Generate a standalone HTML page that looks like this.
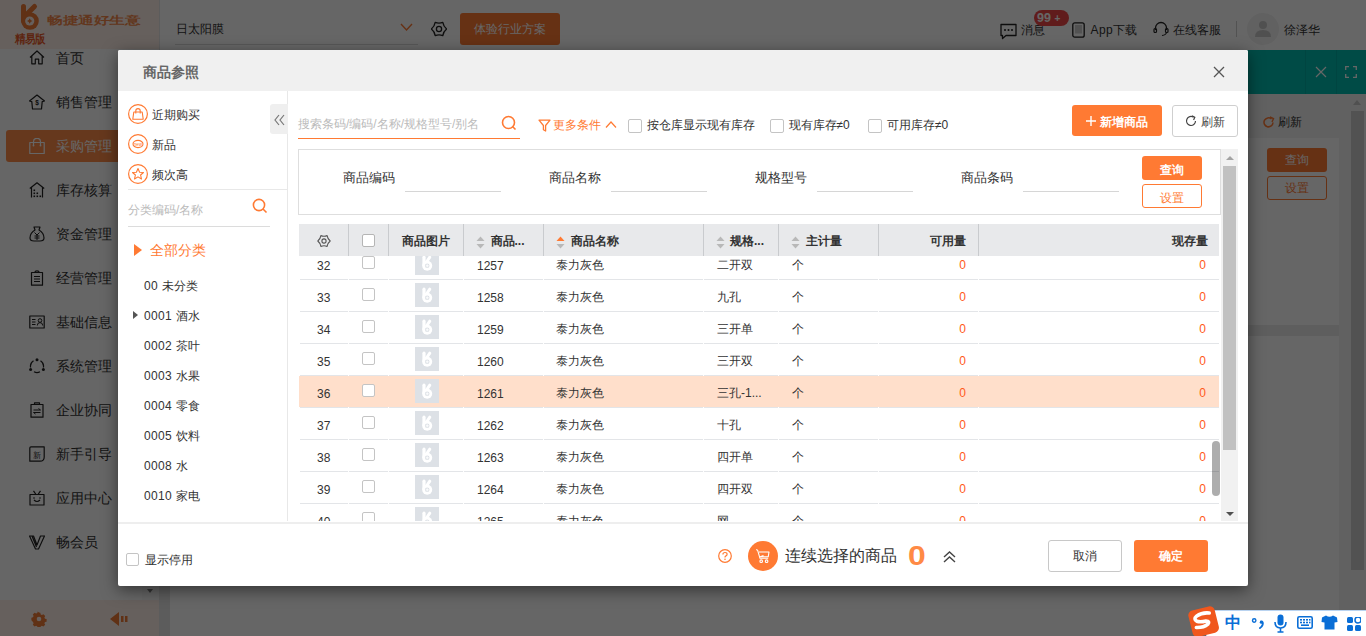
<!DOCTYPE html>
<html><head><meta charset="utf-8">
<style>
*{box-sizing:border-box;margin:0;padding:0}
html,body{width:1366px;height:636px;overflow:hidden;font-family:"Liberation Sans",sans-serif;font-size:12px;color:#333;background:#fff}
.a{position:absolute}
.t{position:absolute;white-space:nowrap;line-height:1}
/* background */
#bg{position:absolute;left:0;top:0;width:1366px;height:636px;background:#f4f4f4}
#side{left:0;top:0;width:160px;height:636px;background:#fff;border-right:1px solid #e6e6e6}
#logo{left:0;top:0;width:159px;height:49px;background:#fff1e8}
.mi{position:absolute;left:56px;font-size:14px;color:#333;line-height:1}
.ic{position:absolute;left:29px;width:16px;height:16px}
#top{left:160px;top:0;width:1206px;height:50px;background:#fff}
#ov{position:absolute;left:0;top:0;width:1366px;height:636px;background:rgba(0,0,0,0.6)}
/* modal */
#modal{position:absolute;left:118px;top:50px;width:1130px;height:536px;background:#fff;border-radius:2px;box-shadow:0 4px 16px rgba(0,0,0,0.5);overflow:hidden}
#mh{position:absolute;left:0;top:0;width:1130px;height:41px;background:#f0f0f0}
.cb{position:absolute;width:13px;height:13px;border:1px solid #c4c4c4;border-radius:2px;background:#fff}
.btn{position:absolute;border-radius:3px;text-align:center;line-height:1}
.or{color:#ff7a33}
</style></head><body>
<div id="bg">
  <div id="side" class="a">
    <div id="logo" class="a">
      <svg class="a" style="left:0px;top:0px" width="50" height="34" viewBox="0 0 50 34">
        <path d="M23.5 6.5 V21" stroke="#f07a35" stroke-width="5" stroke-linecap="round"/>
        <path d="M34.5 6.5 L27 14" stroke="#f07a35" stroke-width="5" stroke-linecap="round"/>
        <circle cx="30" cy="21" r="8.8" fill="#f07a35"/>
        <circle cx="29.7" cy="21" r="4.6" fill="#fff1e8"/>
        <path d="M29.7 18.3 Q30.2 20.5 32.4 21 Q30.2 21.5 29.7 23.7 Q29.2 21.5 27 21 Q29.2 20.5 29.7 18.3Z" fill="#f07a35"/>
      </svg>
      <div class="t" style="left:47px;top:12.5px;font-size:15.3px;font-weight:bold;color:#f5884a;letter-spacing:0.6px;transform:scaleY(0.7);transform-origin:0 50%;line-height:16px">畅捷通好生意</div>
      <div class="t" style="left:15px;top:33.5px;font-size:10px;font-weight:bold;color:#e85a2a;transform:scaleY(1.15);transform-origin:0 0">精易版</div>
    </div>
    <div class="a" style="left:6px;top:130px;width:154px;height:32px;background:#ff8d4a;border-radius:3px"></div>
    
    <svg class="ic" style="top:49.6px" viewBox="0 0 16 16"><path d="M1 7.5 L8 1 L15 7.5 M2.8 6 V13.8 H6.3 V9.2 H9.7 V13.8 H13.2 V6" fill="none" stroke="#222" stroke-width="1.2" stroke-linejoin="round"/></svg>
    <div class="mi" style="top:50.6px;color:#333">首页</div>
    <svg class="ic" style="top:93.6px" viewBox="0 0 16 16"><path d="M8 1 L15.5 7 L13.2 7.6 L12.5 15 H3.5 L2.8 7.6 L0.5 7 Z" fill="none" stroke="#222" stroke-width="1.2" stroke-linejoin="round"/><text x="8" y="11.3" font-size="6.5" font-weight="bold" text-anchor="middle" fill="#222" font-family="Liberation Sans">$</text></svg>
    <div class="mi" style="top:94.6px;color:#333">销售管理</div>
    <svg class="ic" style="top:137.6px" viewBox="0 0 16 16"><path d="M0.8 4.5 H15.2 V15.5 H0.8 Z M4.5 7.5 V3.8 A3.5 3.5 0 0 1 11.5 3.8 V7.5" fill="none" stroke="#fff" stroke-width="1.2" stroke-linejoin="round"/><circle cx="4.5" cy="7.6" r="0.9" fill="#fff"/><circle cx="11.5" cy="7.6" r="0.9" fill="#fff"/></svg>
    <div class="mi" style="top:138.6px;color:#fff">采购管理</div>
    <svg class="ic" style="top:181.6px" viewBox="0 0 16 16"><path d="M0.8 6.5 L8 0.8 L15.2 6.5 M2.5 5.2 V15.5 M13.5 5.2 V15.5" fill="none" stroke="#222" stroke-width="1.2" stroke-linejoin="round"/><g fill="#222"><rect x="4.5" y="7.5" width="1.6" height="1.6"/><rect x="4.5" y="10.5" width="1.6" height="1.6"/><rect x="7.5" y="10.5" width="1.6" height="1.6"/><rect x="4.5" y="13.5" width="1.6" height="1.6"/><rect x="7.5" y="13.5" width="1.6" height="1.6"/><rect x="10.5" y="13.5" width="1.6" height="1.6"/></g></svg>
    <div class="mi" style="top:182.6px;color:#333">库存核算</div>
    <svg class="ic" style="top:225.6px" viewBox="0 0 16 16"><path d="M5 1 H11 L10 4 Q15 7 15 12 Q15 15 11 15 H5 Q1 15 1 12 Q1 7 6 4 Z" fill="none" stroke="#222" stroke-width="1.2" stroke-linejoin="round"/><path d="M5.5 6.5 L8 9 L10.5 6.5 M8 9 V14 M5.5 10 H10.5 M5.5 12 H10.5" fill="none" stroke="#222" stroke-width="1"/></svg>
    <div class="mi" style="top:226.6px;color:#333">资金管理</div>
    <svg class="ic" style="top:269.6px" viewBox="0 0 16 16"><path d="M2.5 2.5 H13.5 V15.2 H2.5 Z M6 2.5 Q6 0.8 8 0.8 Q10 0.8 10 2.5" fill="none" stroke="#222" stroke-width="1.2" stroke-linejoin="round"/><path d="M5 6.5 H11 M5 9 H11 M5 11.5 H11" stroke="#222" stroke-width="1"/></svg>
    <div class="mi" style="top:270.6px;color:#333">经营管理</div>
    <svg class="ic" style="top:313.6px" viewBox="0 0 16 16"><path d="M0.8 2 H15.2 V14 H0.8 Z" fill="none" stroke="#222" stroke-width="1.2" stroke-linejoin="round"/><path d="M3 5.5 H6.5 M3 8 H6.5 M3 10.5 H6.5" stroke="#222" stroke-width="1"/><circle cx="11" cy="6.5" r="1.8" fill="none" stroke="#222" stroke-width="1"/><path d="M8.3 11.5 Q8.3 8.6 11 8.6 Q13.7 8.6 13.7 11.5" fill="none" stroke="#222" stroke-width="1"/></svg>
    <div class="mi" style="top:314.6px;color:#333">基础信息</div>
    <svg class="ic" style="top:357.6px" viewBox="0 0 16 16"><path d="M4.5 2.8 A6.5 6.5 0 0 0 1.6 9.5 M11.5 2.8 A6.5 6.5 0 0 1 14.4 9.5 M5 13.8 A6.5 6.5 0 0 0 11 13.8" fill="none" stroke="#222" stroke-width="1.2" stroke-linejoin="round"/><circle cx="8" cy="1.8" r="1.5" fill="#222"/><circle cx="1.6" cy="11.5" r="1.5" fill="#222"/><circle cx="14.4" cy="11.5" r="1.5" fill="#222"/></svg>
    <div class="mi" style="top:358.6px;color:#333">系统管理</div>
    <svg class="ic" style="top:401.6px" viewBox="0 0 16 16"><path d="M2 2.5 H14 V15.2 H2 Z M5.5 2.5 V0.8 H10.5 V2.5" fill="none" stroke="#222" stroke-width="1.2" stroke-linejoin="round"/><path d="M4.5 8 H11.5 L9.5 6.5 M11.5 10.5 H4.5 L6.5 12" fill="none" stroke="#222" stroke-width="1"/></svg>
    <div class="mi" style="top:402.6px;color:#333">企业协同</div>
    <svg class="ic" style="top:445.6px" viewBox="0 0 16 16"><path d="M2 0.8 H15.2 V11 Q15.2 15.2 11 15.2 H0.8 V2 Q0.8 0.8 2 0.8 Z" fill="none" stroke="#222" stroke-width="1.2" stroke-linejoin="round"/><text x="8" y="11.5" font-size="8" text-anchor="middle" fill="#222" font-family="Liberation Sans">新</text></svg>
    <div class="mi" style="top:446.6px;color:#333">新手引导</div>
    <svg class="ic" style="top:489.6px" viewBox="0 0 16 16"><path d="M1 4.5 H15 V15 H1 Z M4.5 0.8 L7 4.5 M11.5 0.8 L9 4.5" fill="none" stroke="#222" stroke-width="1.2" stroke-linejoin="round"/><path d="M5 10 Q8 13 11 10" fill="none" stroke="#222" stroke-width="1.1"/><circle cx="5" cy="8" r="0.8" fill="#222"/><circle cx="11" cy="8" r="0.8" fill="#222"/></svg>
    <div class="mi" style="top:490.6px;color:#333">应用中心</div>
    <svg class="ic" style="top:533.6px" viewBox="0 0 16 16"><path d="M0.5 2 H4.5 L8 11 L11.5 2 H15.5 L9.5 15 H6.5 Z M3 2 L7.5 13" fill="none" stroke="#222" stroke-width="1.2" stroke-linejoin="round"/></svg>
    <div class="mi" style="top:534.6px;color:#333">畅会员</div>
    <div class="a" style="left:0;top:600px;width:159px;height:36px;background:#fff1e8"></div>
    <svg class="a" style="left:31px;top:611px" width="16" height="16" viewBox="0 0 16 16"><path d="M8 1.5l1.3.3.4 1.6 1.2.6 1.5-.8 1.8 1.8-.8 1.5.6 1.2 1.6.4v2.6l-1.6.4-.6 1.2.8 1.5-1.8 1.8-1.5-.8-1.2.6-.4 1.6H6.7l-.4-1.6-1.2-.6-1.5.8-1.8-1.8.8-1.5-.6-1.2L.4 9.3V6.7L2 6.3l.6-1.2-.8-1.5 1.8-1.8 1.5.8 1.2-.6.4-1.6z" fill="#f07a35"/><circle cx="8" cy="8" r="2.3" fill="#fff1e8"/></svg>
    <svg class="a" style="left:110px;top:611px" width="19" height="16" viewBox="0 0 19 16"><path d="M0 8 L9 1 V15 Z" fill="#f07a35"/><rect x="11" y="5" width="2.5" height="6" fill="#f07a35"/><rect x="15" y="5" width="2.5" height="6" fill="#f07a35"/></svg>
    <div class="a" style="left:142px;top:50px;width:17px;height:550px;background:#fafafa"></div><div class="a" style="left:147px;top:589px;width:0;height:0;border-left:3.7px solid transparent;border-right:3.7px solid transparent;border-top:4px solid #808080"></div>
  </div>
  <div id="top" class="a">
    <div class="t" style="left:16px;top:23px;font-size:12px;color:#333">日太阳膜</div>
    <div class="a" style="left:15px;top:44px;width:243px;height:1px;background:#d9d9d9"></div>
    <svg class="a" style="left:240px;top:22px" width="13" height="10" viewBox="0 0 13 10"><path d="M1 2 L6.5 8 L12 2" fill="none" stroke="#ff7a33" stroke-width="1.4"/></svg>
    <svg class="a" style="left:271px;top:21px" width="16" height="16" viewBox="0 0 16 16"><path d="M15.60 8.00 Q12.45 10.57 11.80 14.58 Q8.00 13.13 4.20 14.58 Q3.55 10.57 0.40 8.00 Q3.55 5.43 4.20 1.42 Q8.00 2.87 11.80 1.42 Q12.45 5.43 15.60 8.00Z" fill="none" stroke="#222" stroke-width="1.3" stroke-linejoin="round"/><circle cx="8" cy="8" r="2.6" fill="none" stroke="#222" stroke-width="1.3"/></svg>
    <div class="a" style="left:300px;top:13px;width:100px;height:32px;background:#ff7a33;border-radius:3px"></div>
    <div class="t" style="left:314px;top:23px;font-size:12px;color:#fff">体验行业方案</div>
    <svg class="a" style="left:840px;top:23px" width="17" height="17" viewBox="0 0 17 17"><path d="M1 1.5 H16 V12.5 H6 L2.5 15.5 V12.5 H1 Z" fill="none" stroke="#222" stroke-width="1.3" stroke-linejoin="round"/><circle cx="5" cy="7" r="1" fill="#222"/><circle cx="8.5" cy="7" r="1" fill="#222"/><circle cx="12" cy="7" r="1" fill="#222"/></svg>
    <div class="t" style="left:861px;top:24px;font-size:12px;color:#333">消息</div>
    <div class="a" style="left:874px;top:10px;width:35px;height:16px;background:#f04848;border-radius:8px"></div>
    <div class="t" style="left:877px;top:11.5px;font-size:12.5px;font-weight:bold;color:#fff">99 <span style="font-size:10px">+</span></div>
    <svg class="a" style="left:912px;top:22px" width="13" height="16" viewBox="0 0 13 16"><rect x="0.8" y="0.8" width="11.4" height="14.4" rx="2" fill="none" stroke="#222" stroke-width="1.3"/><rect x="3" y="3" width="7" height="8.5" fill="#ccc"/></svg>
    <div class="t" style="left:930.5px;top:24px;font-size:12px;color:#333;letter-spacing:0.4px">App下载</div>
    <svg class="a" style="left:993px;top:21px" width="16" height="16" viewBox="0 0 16 16"><path d="M2.5 9 V7 A5.5 5.5 0 0 1 13.5 7 V9" fill="none" stroke="#222" stroke-width="1.3"/><rect x="1" y="7.5" width="2.5" height="4" rx="1" fill="none" stroke="#222" stroke-width="1.2"/><rect x="12.5" y="7.5" width="2.5" height="4" rx="1" fill="none" stroke="#222" stroke-width="1.2"/><path d="M13.5 11.5 Q13 14 9 14.5" fill="none" stroke="#222" stroke-width="1.2"/></svg>
    <div class="t" style="left:1013px;top:24px;font-size:12px;color:#333">在线客服</div>
    <div class="a" style="left:1076px;top:21px;width:1px;height:16px;background:#ccc"></div>
    <div class="a" style="left:1087px;top:13px;width:32px;height:32px;border-radius:50%;background:#f2f2f2"></div>
    <svg class="a" style="left:1095px;top:20px" width="16" height="17" viewBox="0 0 16 17"><circle cx="8" cy="5" r="4" fill="#c8c8c8"/><path d="M0 17 Q0 10 8 10 Q16 10 16 17Z" fill="#c8c8c8"/></svg>
    <div class="t" style="left:1124px;top:24px;font-size:12px;color:#333">徐泽华</div>
  </div>
  <div class="a" style="left:160px;top:50px;width:1206px;height:1px;background:#eee"></div>
  <div class="a" style="left:170px;top:50px;width:1196px;height:44px;background:#00bcb0"></div>
  <div class="a" style="left:1305px;top:50px;width:1px;height:44px;background:rgba(0,0,0,0.08)"></div>
  <div class="a" style="left:1336px;top:50px;width:1px;height:44px;background:rgba(0,0,0,0.08)"></div>
  <svg class="a" style="left:1315px;top:66px" width="12" height="12" viewBox="0 0 12 12"><path d="M1 1 L11 11 M11 1 L1 11" stroke="#fff" stroke-width="1.2"/></svg>
  <svg class="a" style="left:1345px;top:66px" width="12" height="12" viewBox="0 0 12 12"><path d="M0.7 4 V0.7 H4 M8 0.7 H11.3 V4 M11.3 8 V11.3 H8 M4 11.3 H0.7 V8" fill="none" stroke="#fff" stroke-width="1.3"/></svg>
  <div class="a" style="left:160px;top:50px;width:10px;height:586px;background:#e6e6e6"></div><div class="a" style="left:170px;top:94px;width:1196px;height:542px;background:#f2f2f2"></div>
  <svg class="a" style="left:1262px;top:116px" width="13" height="13" viewBox="0 0 13 13"><path d="M11 6.5 A4.5 4.5 0 1 1 9.5 3" fill="none" stroke="#ff7a33" stroke-width="1.5"/><path d="M8 1 L11.5 2.5 L10 6" fill="none" stroke="#ff7a33" stroke-width="1.4"/></svg>
  <div class="t" style="left:1278px;top:116px;font-size:12px;color:#333">刷新</div>
  <div class="a" style="left:170px;top:138px;width:1169px;height:187px;background:#fff"></div>
  <div class="a" style="left:170px;top:325px;width:1169px;height:11px;background:#ebebeb"></div>
  <div class="a" style="left:170px;top:336px;width:1169px;height:300px;background:#fff"></div>
  <div class="a" style="left:1267px;top:148px;width:60px;height:24px;background:#ff7a33;border-radius:3px"></div>
  <div class="t" style="left:1285px;top:154px;font-size:12px;color:#fff">查询</div>
  <div class="a" style="left:1267px;top:176px;width:60px;height:24px;border:1px solid #ff7a33;border-radius:3px"></div>
  <div class="t" style="left:1285px;top:182px;font-size:12px;color:#ff7a33">设置</div>
  
  <div class="a" style="left:1351px;top:111px;width:13px;height:459px;background:#cdcdcd"></div>
  <div class="a" style="left:1353px;top:100px;width:0;height:0;border-left:4.5px solid transparent;border-right:4.5px solid transparent;border-bottom:5px solid #c8c8c8"></div>
</div>
<div id="ov"></div>
<div id="modal">
  <div id="mh"><div class="t" style="left:25px;top:14.5px;font-size:14px;font-weight:bold;color:#666">商品参照</div>
    <svg class="a" style="left:1095px;top:16px" width="12" height="12" viewBox="0 0 12 12"><path d="M1 1 L11 11 M11 1 L1 11" stroke="#555" stroke-width="1.3"/></svg>
  </div>
  <!-- left panel -->
  <div class="a" style="left:169px;top:41px;width:1px;height:430px;background:#e8e8e8"></div>
    <svg class="a" style="left:10px;top:54px" width="20" height="20" viewBox="0 0 20 20"><circle cx="10" cy="10" r="9.4" fill="none" stroke="#ff7a33" stroke-width="1.2"/><path d="M5.8 8 H14.2 L15.2 15.2 H4.8 Z M7.8 9.5 V6.8 A2.2 2.2 0 0 1 12.2 6.8 V9.5" fill="none" stroke="#ff7a33" stroke-width="1.1" stroke-linejoin="round"/></svg>
  <div class="t" style="left:34px;top:59px;font-size:12px;color:#333">近期购买</div>
  <svg class="a" style="left:10px;top:84px" width="20" height="20" viewBox="0 0 20 20"><circle cx="10" cy="10" r="9.4" fill="none" stroke="#ff7a33" stroke-width="1.2"/><ellipse cx="10" cy="10" rx="5" ry="3.6" fill="none" stroke="#ff7a33" stroke-width="1.1"/><text x="10" y="11.6" font-size="4.5" text-anchor="middle" fill="#ff7a33" font-family="Liberation Sans">new</text></svg>
  <div class="t" style="left:34px;top:89px;font-size:12px;color:#333">新品</div>
  <svg class="a" style="left:10px;top:114px" width="20" height="20" viewBox="0 0 20 20"><circle cx="10" cy="10" r="9.4" fill="none" stroke="#ff7a33" stroke-width="1.2"/><path d="M10 4.5 L11.6 8.2 L15.5 8.5 L12.6 11 L13.5 15 L10 12.9 L6.5 15 L7.4 11 L4.5 8.5 L8.4 8.2 Z" fill="none" stroke="#ff7a33" stroke-width="1.1" stroke-linejoin="round"/></svg>
  <div class="t" style="left:34px;top:119px;font-size:12px;color:#333">频次高</div>

  <div class="a" style="left:152px;top:54px;width:18px;height:30px;background:#efefef;border-radius:3px 0 0 3px"></div>
  <svg class="a" style="left:156px;top:64px" width="11" height="12" viewBox="0 0 11 12"><path d="M5 1 L1 6 L5 11 M10 1 L6 6 L10 11" fill="none" stroke="#777" stroke-width="1.2"/></svg>
  <div class="a" style="left:10px;top:139px;width:159px;height:1px;background:#e8e8e8"></div>
  <div class="t" style="left:10px;top:154px;font-size:12px;color:#bbb">分类编码/名称</div>
  <svg class="a" style="left:134px;top:148px" width="16" height="16" viewBox="0 0 16 16"><circle cx="7" cy="7" r="5.6" fill="none" stroke="#ff7a33" stroke-width="1.6"/><path d="M11 11 L14.5 14.5" stroke="#ff7a33" stroke-width="1.6"/></svg>
  <div class="a" style="left:10px;top:176px;width:142px;height:1px;background:#dcdcdc"></div>
  <div class="a" style="left:16px;top:194px;width:0;height:0;border-top:6px solid transparent;border-bottom:6px solid transparent;border-left:8px solid #ff7a33"></div>
  <div class="t" style="left:32px;top:193px;font-size:14px;color:#ff7a33">全部分类</div>
    <div class="t" style="left:26px;top:229.5px;font-size:12px;color:#333;letter-spacing:0.3px">00 未分类</div>
  <div class="t" style="left:26px;top:259.5px;font-size:12px;color:#333;letter-spacing:0.3px">0001 酒水</div>
  <div class="t" style="left:26px;top:289.5px;font-size:12px;color:#333;letter-spacing:0.3px">0002 茶叶</div>
  <div class="t" style="left:26px;top:319.5px;font-size:12px;color:#333;letter-spacing:0.3px">0003 水果</div>
  <div class="t" style="left:26px;top:349.5px;font-size:12px;color:#333;letter-spacing:0.3px">0004 零食</div>
  <div class="t" style="left:26px;top:379.5px;font-size:12px;color:#333;letter-spacing:0.3px">0005 饮料</div>
  <div class="t" style="left:26px;top:409.5px;font-size:12px;color:#333;letter-spacing:0.3px">0008 水</div>
  <div class="t" style="left:26px;top:439.5px;font-size:12px;color:#333;letter-spacing:0.3px">0010 家电</div>
  <div class="a" style="left:15px;top:261px;width:0;height:0;border-top:4px solid transparent;border-bottom:4px solid transparent;border-left:5px solid #555"></div>

  <div class="a" style="left:0;top:472px;width:1130px;height:2px;background:#eeeeee"></div>
  <div class="cb" style="left:8px;top:503px"></div>
  <div class="t" style="left:27px;top:504px;font-size:12px;color:#333">显示停用</div>
  <svg class="a" style="left:599.5px;top:499px" width="14" height="14" viewBox="0 0 14 14"><circle cx="7" cy="7" r="6.3" fill="none" stroke="#ff7a33" stroke-width="1.2"/><path d="M4.9 5.4 Q4.9 3.5 7 3.5 Q9.1 3.5 9.1 5.3 Q9.1 6.5 7.6 7.1 Q7 7.4 7 8.4" fill="none" stroke="#ff7a33" stroke-width="1.2"/><circle cx="7" cy="10.3" r="0.8" fill="#ff7a33"/></svg>
  <div class="a" style="left:630px;top:491px;width:30px;height:30px;border-radius:50%;background:#ff7a33"></div>
  <svg class="a" style="left:637px;top:498px" width="16" height="16" viewBox="0 0 16 16"><path d="M1.2 1.5 L2.6 2.2 L5 10.3 H13.2 M4 4 H14 L13.2 8.8 H5.3 L8.5 7.4" fill="none" stroke="#fff" stroke-width="1.1" stroke-linejoin="round"/><circle cx="6.2" cy="13.2" r="1.3" fill="none" stroke="#fff" stroke-width="1.1"/><circle cx="11.6" cy="13.2" r="1.3" fill="none" stroke="#fff" stroke-width="1.1"/></svg>
  <div class="t" style="left:666.5px;top:498px;font-size:16px;color:#333">连续选择的商品</div>
  <div class="t" style="left:789.5px;top:492.5px;font-size:27px;font-weight:bold;color:#ff8a45;transform:scaleX(1.18);transform-origin:0 0">0</div>
  <svg class="a" style="left:824.5px;top:500.5px" width="13" height="12" viewBox="0 0 13 12"><path d="M1 6 L6.5 1 L12 6 M1 11 L6.5 6 L12 11" fill="none" stroke="#444" stroke-width="1.4"/></svg>
  <div class="btn" style="left:930px;top:490px;width:74px;height:32px;border:1px solid #c8c8c8;background:#fff"></div>
  <div class="t" style="left:930px;width:74px;text-align:center;top:500px;font-size:12px;color:#333">取消</div>
  <div class="btn" style="left:1016px;top:490px;width:74px;height:32px;background:#ff7a33"></div>
  <div class="t" style="left:1016px;width:74px;text-align:center;top:500px;font-size:12px;font-weight:bold;color:#fff">确定</div>

  <div class="t" style="left:180px;top:68px;font-size:12px;color:#bbb">搜索条码/编码/名称/规格型号/别名</div>
  <div class="a" style="left:180px;top:88px;width:222px;height:1px;background:#ff7a33"></div>
  <svg class="a" style="left:383px;top:65px" width="16" height="16" viewBox="0 0 16 16"><circle cx="7.5" cy="7.5" r="6" fill="none" stroke="#ff7a33" stroke-width="1.6"/><path d="M11.5 11.5 L14.5 14.5" stroke="#ff7a33" stroke-width="1.6"/></svg>
  <svg class="a" style="left:420px;top:69px" width="13" height="13" viewBox="0 0 13 13"><path d="M1 1.2 H12 L7.6 6.5 V12 L5.4 10.8 V6.5 Z" fill="none" stroke="#ff7a33" stroke-width="1.3" stroke-linejoin="round"/></svg>
  <div class="t" style="left:435px;top:69px;font-size:12px;color:#ff7a33">更多条件</div>
  <svg class="a" style="left:487px;top:70px" width="12" height="9" viewBox="0 0 12 9"><path d="M1 7.5 L6 2 L11 7.5" fill="none" stroke="#ff7a33" stroke-width="1.2"/></svg>
  <div class="cb" style="left:510px;top:68.5px;width:14px;height:14px"></div>
  <div class="t" style="left:528.5px;top:69px;font-size:12px;color:#333">按仓库显示现有库存</div>
  <div class="cb" style="left:652px;top:68.5px;width:14px;height:14px"></div>
  <div class="t" style="left:670.5px;top:69px;font-size:12px;color:#333">现有库存≠0</div>
  <div class="cb" style="left:750px;top:68.5px;width:14px;height:14px"></div>
  <div class="t" style="left:769px;top:69px;font-size:12px;color:#333">可用库存≠0</div>
  <div class="btn" style="left:954px;top:55px;width:90px;height:31px;background:#ff7a33"></div>
  <svg class="a" style="left:968px;top:66px" width="10" height="10" viewBox="0 0 10 10"><path d="M5 0 V10 M0 5 H10" stroke="#fff" stroke-width="1.4"/></svg>
  <div class="t" style="left:982px;top:65.5px;font-size:12px;font-weight:bold;color:#fff">新增商品</div>
  <div class="btn" style="left:1054px;top:55px;width:66px;height:31.5px;border:1px solid #cfcfcf;background:#fff"></div>
  <svg class="a" style="left:1066.5px;top:65px" width="12" height="12" viewBox="0 0 12 12"><path d="M10.5 6 A4.5 4.5 0 1 1 8.6 2.3" fill="none" stroke="#444" stroke-width="1.2"/><path d="M7 0.8 L9.8 2.2 L8.6 5" fill="none" stroke="#444" stroke-width="1.2"/></svg>
  <div class="t" style="left:1083px;top:65.5px;font-size:12px;color:#444">刷新</div>
  <div class="a" style="left:180px;top:99px;width:940px;height:372px;overflow:hidden"><div class="a" style="left:0;top:1px;width:940px;height:371px">
    <div class="a" style="left:0;top:-1px;width:923px;height:66px;border:1px solid #dedede"></div>
    <div class="t" style="left:45.4px;top:21.0px;font-size:13px;color:#333">商品编码</div>
    <div class="a" style="left:107px;top:40.5px;width:96px;height:1px;background:#d6d6d6"></div>
    <div class="t" style="left:251.4px;top:21.0px;font-size:13px;color:#333">商品名称</div>
    <div class="a" style="left:313px;top:40.5px;width:96px;height:1px;background:#d6d6d6"></div>
    <div class="t" style="left:457.4px;top:21.0px;font-size:13px;color:#333">规格型号</div>
    <div class="a" style="left:519px;top:40.5px;width:96px;height:1px;background:#d6d6d6"></div>
    <div class="t" style="left:663.4px;top:21.0px;font-size:13px;color:#333">商品条码</div>
    <div class="a" style="left:725px;top:40.5px;width:96px;height:1px;background:#d6d6d6"></div>
    <div class="btn" style="left:844px;top:6px;width:60px;height:24px;background:#ff7a33"></div>
    <div class="t" style="left:862px;top:13.5px;font-size:12px;font-weight:bold;color:#fff">查询</div>
    <div class="btn" style="left:844px;top:34px;width:60px;height:24px;border:1px solid #ff7a33"></div>
    <div class="t" style="left:862px;top:41.5px;font-size:12px;color:#ff7a33">设置</div>
    <div class="a" style="left:923px;top:-1px;width:17px;height:372px;background:#f1f1f1"></div>
    <div class="a" style="left:925px;top:16px;width:13px;height:284px;background:#c1c1c1"></div>
    <div class="a" style="left:927.5px;top:5.5px;width:0;height:0;border-left:4px solid transparent;border-right:4px solid transparent;border-bottom:4.5px solid #a3a3a3"></div>
    <div class="a" style="left:927.5px;top:362px;width:0;height:0;border-left:4px solid transparent;border-right:4px solid transparent;border-top:4.5px solid #505050"></div>
    <div class="a" style="left:1.5px;top:129.0px;width:48.5px;height:1px;background:#e3e5e8"></div>
    <div class="a" style="left:51.0px;top:129.0px;width:39.0px;height:1px;background:#e3e5e8"></div>
    <div class="a" style="left:91.0px;top:129.0px;width:74.0px;height:1px;background:#e3e5e8"></div>
    <div class="a" style="left:166.0px;top:129.0px;width:79.0px;height:1px;background:#e3e5e8"></div>
    <div class="a" style="left:246.0px;top:129.0px;width:159.0px;height:1px;background:#e3e5e8"></div>
    <div class="a" style="left:406.0px;top:129.0px;width:74.0px;height:1px;background:#e3e5e8"></div>
    <div class="a" style="left:481.0px;top:129.0px;width:99.0px;height:1px;background:#e3e5e8"></div>
    <div class="a" style="left:581.0px;top:129.0px;width:99.0px;height:1px;background:#e3e5e8"></div>
    <div class="a" style="left:681.0px;top:129.0px;width:239.5px;height:1px;background:#e3e5e8"></div>
    <div class="t" style="left:1px;width:49.5px;text-align:center;top:109.5px;font-size:12px;color:#333">32</div>
    <div class="cb" style="left:64px;top:105.80px"></div>
    <svg class="a" style="left:116.5px;top:100.50px" width="24" height="24" viewBox="0 0 24 24"><rect width="24" height="24" fill="#dde1e6"/><path d="M9 6.2 V14" stroke="#fff" stroke-width="3.2" stroke-linecap="round"/><path d="M14.8 6.2 L11.5 11" stroke="#fff" stroke-width="3" stroke-linecap="round"/><circle cx="12.2" cy="14.8" r="5" fill="#fff"/><circle cx="12.2" cy="14.8" r="2.3" fill="#dde1e6"/><path d="M12.2 13.3 V16.3 M10.7 14.8 H13.7" stroke="#fff" stroke-width="0.9"/></svg>
    <div class="t" style="left:179px;top:109.5px;font-size:12px;color:#333">1257</div>
    <div class="t" style="left:258px;top:108.5px;font-size:12px;color:#333">泰力灰色</div>
    <div class="t" style="left:419px;top:108.5px;font-size:12px;color:#333">二开双</div>
    <div class="t" style="left:494px;top:108.5px;font-size:12px;color:#333">个</div>
    <div class="t" style="left:580.5px;width:87.5px;text-align:right;top:108.5px;font-size:12px;color:#ff5a1a">0</div>
    <div class="t" style="left:680.5px;width:227.5px;text-align:right;top:108.5px;font-size:12px;color:#ff5a1a">0</div>
    <div class="a" style="left:1.5px;top:161.0px;width:48.5px;height:1px;background:#e3e5e8"></div>
    <div class="a" style="left:51.0px;top:161.0px;width:39.0px;height:1px;background:#e3e5e8"></div>
    <div class="a" style="left:91.0px;top:161.0px;width:74.0px;height:1px;background:#e3e5e8"></div>
    <div class="a" style="left:166.0px;top:161.0px;width:79.0px;height:1px;background:#e3e5e8"></div>
    <div class="a" style="left:246.0px;top:161.0px;width:159.0px;height:1px;background:#e3e5e8"></div>
    <div class="a" style="left:406.0px;top:161.0px;width:74.0px;height:1px;background:#e3e5e8"></div>
    <div class="a" style="left:481.0px;top:161.0px;width:99.0px;height:1px;background:#e3e5e8"></div>
    <div class="a" style="left:581.0px;top:161.0px;width:99.0px;height:1px;background:#e3e5e8"></div>
    <div class="a" style="left:681.0px;top:161.0px;width:239.5px;height:1px;background:#e3e5e8"></div>
    <div class="t" style="left:1px;width:49.5px;text-align:center;top:141.5px;font-size:12px;color:#333">33</div>
    <div class="cb" style="left:64px;top:137.80px"></div>
    <svg class="a" style="left:116.5px;top:132.50px" width="24" height="24" viewBox="0 0 24 24"><rect width="24" height="24" fill="#dde1e6"/><path d="M9 6.2 V14" stroke="#fff" stroke-width="3.2" stroke-linecap="round"/><path d="M14.8 6.2 L11.5 11" stroke="#fff" stroke-width="3" stroke-linecap="round"/><circle cx="12.2" cy="14.8" r="5" fill="#fff"/><circle cx="12.2" cy="14.8" r="2.3" fill="#dde1e6"/><path d="M12.2 13.3 V16.3 M10.7 14.8 H13.7" stroke="#fff" stroke-width="0.9"/></svg>
    <div class="t" style="left:179px;top:141.5px;font-size:12px;color:#333">1258</div>
    <div class="t" style="left:258px;top:140.5px;font-size:12px;color:#333">泰力灰色</div>
    <div class="t" style="left:419px;top:140.5px;font-size:12px;color:#333">九孔</div>
    <div class="t" style="left:494px;top:140.5px;font-size:12px;color:#333">个</div>
    <div class="t" style="left:580.5px;width:87.5px;text-align:right;top:140.5px;font-size:12px;color:#ff5a1a">0</div>
    <div class="t" style="left:680.5px;width:227.5px;text-align:right;top:140.5px;font-size:12px;color:#ff5a1a">0</div>
    <div class="a" style="left:1.5px;top:193.0px;width:48.5px;height:1px;background:#e3e5e8"></div>
    <div class="a" style="left:51.0px;top:193.0px;width:39.0px;height:1px;background:#e3e5e8"></div>
    <div class="a" style="left:91.0px;top:193.0px;width:74.0px;height:1px;background:#e3e5e8"></div>
    <div class="a" style="left:166.0px;top:193.0px;width:79.0px;height:1px;background:#e3e5e8"></div>
    <div class="a" style="left:246.0px;top:193.0px;width:159.0px;height:1px;background:#e3e5e8"></div>
    <div class="a" style="left:406.0px;top:193.0px;width:74.0px;height:1px;background:#e3e5e8"></div>
    <div class="a" style="left:481.0px;top:193.0px;width:99.0px;height:1px;background:#e3e5e8"></div>
    <div class="a" style="left:581.0px;top:193.0px;width:99.0px;height:1px;background:#e3e5e8"></div>
    <div class="a" style="left:681.0px;top:193.0px;width:239.5px;height:1px;background:#e3e5e8"></div>
    <div class="t" style="left:1px;width:49.5px;text-align:center;top:173.5px;font-size:12px;color:#333">34</div>
    <div class="cb" style="left:64px;top:169.80px"></div>
    <svg class="a" style="left:116.5px;top:164.50px" width="24" height="24" viewBox="0 0 24 24"><rect width="24" height="24" fill="#dde1e6"/><path d="M9 6.2 V14" stroke="#fff" stroke-width="3.2" stroke-linecap="round"/><path d="M14.8 6.2 L11.5 11" stroke="#fff" stroke-width="3" stroke-linecap="round"/><circle cx="12.2" cy="14.8" r="5" fill="#fff"/><circle cx="12.2" cy="14.8" r="2.3" fill="#dde1e6"/><path d="M12.2 13.3 V16.3 M10.7 14.8 H13.7" stroke="#fff" stroke-width="0.9"/></svg>
    <div class="t" style="left:179px;top:173.5px;font-size:12px;color:#333">1259</div>
    <div class="t" style="left:258px;top:172.5px;font-size:12px;color:#333">泰力灰色</div>
    <div class="t" style="left:419px;top:172.5px;font-size:12px;color:#333">三开单</div>
    <div class="t" style="left:494px;top:172.5px;font-size:12px;color:#333">个</div>
    <div class="t" style="left:580.5px;width:87.5px;text-align:right;top:172.5px;font-size:12px;color:#ff5a1a">0</div>
    <div class="t" style="left:680.5px;width:227.5px;text-align:right;top:172.5px;font-size:12px;color:#ff5a1a">0</div>
    <div class="a" style="left:1.5px;top:225.0px;width:48.5px;height:1px;background:#e3e5e8"></div>
    <div class="a" style="left:51.0px;top:225.0px;width:39.0px;height:1px;background:#e3e5e8"></div>
    <div class="a" style="left:91.0px;top:225.0px;width:74.0px;height:1px;background:#e3e5e8"></div>
    <div class="a" style="left:166.0px;top:225.0px;width:79.0px;height:1px;background:#e3e5e8"></div>
    <div class="a" style="left:246.0px;top:225.0px;width:159.0px;height:1px;background:#e3e5e8"></div>
    <div class="a" style="left:406.0px;top:225.0px;width:74.0px;height:1px;background:#e3e5e8"></div>
    <div class="a" style="left:481.0px;top:225.0px;width:99.0px;height:1px;background:#e3e5e8"></div>
    <div class="a" style="left:581.0px;top:225.0px;width:99.0px;height:1px;background:#e3e5e8"></div>
    <div class="a" style="left:681.0px;top:225.0px;width:239.5px;height:1px;background:#e3e5e8"></div>
    <div class="t" style="left:1px;width:49.5px;text-align:center;top:205.5px;font-size:12px;color:#333">35</div>
    <div class="cb" style="left:64px;top:201.80px"></div>
    <svg class="a" style="left:116.5px;top:196.50px" width="24" height="24" viewBox="0 0 24 24"><rect width="24" height="24" fill="#dde1e6"/><path d="M9 6.2 V14" stroke="#fff" stroke-width="3.2" stroke-linecap="round"/><path d="M14.8 6.2 L11.5 11" stroke="#fff" stroke-width="3" stroke-linecap="round"/><circle cx="12.2" cy="14.8" r="5" fill="#fff"/><circle cx="12.2" cy="14.8" r="2.3" fill="#dde1e6"/><path d="M12.2 13.3 V16.3 M10.7 14.8 H13.7" stroke="#fff" stroke-width="0.9"/></svg>
    <div class="t" style="left:179px;top:205.5px;font-size:12px;color:#333">1260</div>
    <div class="t" style="left:258px;top:204.5px;font-size:12px;color:#333">泰力灰色</div>
    <div class="t" style="left:419px;top:204.5px;font-size:12px;color:#333">三开双</div>
    <div class="t" style="left:494px;top:204.5px;font-size:12px;color:#333">个</div>
    <div class="t" style="left:580.5px;width:87.5px;text-align:right;top:204.5px;font-size:12px;color:#ff5a1a">0</div>
    <div class="t" style="left:680.5px;width:227.5px;text-align:right;top:204.5px;font-size:12px;color:#ff5a1a">0</div>
    <div class="a" style="left:1px;top:226.0px;width:920px;height:31px;background:#ffdfcb"></div>
    <div class="a" style="left:1.5px;top:257.0px;width:48.5px;height:1px;background:#e3e5e8"></div>
    <div class="a" style="left:51.0px;top:257.0px;width:39.0px;height:1px;background:#e3e5e8"></div>
    <div class="a" style="left:91.0px;top:257.0px;width:74.0px;height:1px;background:#e3e5e8"></div>
    <div class="a" style="left:166.0px;top:257.0px;width:79.0px;height:1px;background:#e3e5e8"></div>
    <div class="a" style="left:246.0px;top:257.0px;width:159.0px;height:1px;background:#e3e5e8"></div>
    <div class="a" style="left:406.0px;top:257.0px;width:74.0px;height:1px;background:#e3e5e8"></div>
    <div class="a" style="left:481.0px;top:257.0px;width:99.0px;height:1px;background:#e3e5e8"></div>
    <div class="a" style="left:581.0px;top:257.0px;width:99.0px;height:1px;background:#e3e5e8"></div>
    <div class="a" style="left:681.0px;top:257.0px;width:239.5px;height:1px;background:#e3e5e8"></div>
    <div class="t" style="left:1px;width:49.5px;text-align:center;top:237.5px;font-size:12px;color:#333">36</div>
    <div class="cb" style="left:64px;top:233.80px"></div>
    <svg class="a" style="left:116.5px;top:228.50px" width="24" height="24" viewBox="0 0 24 24"><rect width="24" height="24" fill="#dde1e6"/><path d="M9 6.2 V14" stroke="#fff" stroke-width="3.2" stroke-linecap="round"/><path d="M14.8 6.2 L11.5 11" stroke="#fff" stroke-width="3" stroke-linecap="round"/><circle cx="12.2" cy="14.8" r="5" fill="#fff"/><circle cx="12.2" cy="14.8" r="2.3" fill="#dde1e6"/><path d="M12.2 13.3 V16.3 M10.7 14.8 H13.7" stroke="#fff" stroke-width="0.9"/></svg>
    <div class="t" style="left:179px;top:237.5px;font-size:12px;color:#333">1261</div>
    <div class="t" style="left:258px;top:236.5px;font-size:12px;color:#333">泰力灰色</div>
    <div class="t" style="left:419px;top:236.5px;font-size:12px;color:#333">三孔-1...</div>
    <div class="t" style="left:494px;top:236.5px;font-size:12px;color:#333">个</div>
    <div class="t" style="left:580.5px;width:87.5px;text-align:right;top:236.5px;font-size:12px;color:#ff5a1a">0</div>
    <div class="t" style="left:680.5px;width:227.5px;text-align:right;top:236.5px;font-size:12px;color:#ff5a1a">0</div>
    <div class="a" style="left:1.5px;top:289.0px;width:48.5px;height:1px;background:#e3e5e8"></div>
    <div class="a" style="left:51.0px;top:289.0px;width:39.0px;height:1px;background:#e3e5e8"></div>
    <div class="a" style="left:91.0px;top:289.0px;width:74.0px;height:1px;background:#e3e5e8"></div>
    <div class="a" style="left:166.0px;top:289.0px;width:79.0px;height:1px;background:#e3e5e8"></div>
    <div class="a" style="left:246.0px;top:289.0px;width:159.0px;height:1px;background:#e3e5e8"></div>
    <div class="a" style="left:406.0px;top:289.0px;width:74.0px;height:1px;background:#e3e5e8"></div>
    <div class="a" style="left:481.0px;top:289.0px;width:99.0px;height:1px;background:#e3e5e8"></div>
    <div class="a" style="left:581.0px;top:289.0px;width:99.0px;height:1px;background:#e3e5e8"></div>
    <div class="a" style="left:681.0px;top:289.0px;width:239.5px;height:1px;background:#e3e5e8"></div>
    <div class="t" style="left:1px;width:49.5px;text-align:center;top:269.5px;font-size:12px;color:#333">37</div>
    <div class="cb" style="left:64px;top:265.80px"></div>
    <svg class="a" style="left:116.5px;top:260.50px" width="24" height="24" viewBox="0 0 24 24"><rect width="24" height="24" fill="#dde1e6"/><path d="M9 6.2 V14" stroke="#fff" stroke-width="3.2" stroke-linecap="round"/><path d="M14.8 6.2 L11.5 11" stroke="#fff" stroke-width="3" stroke-linecap="round"/><circle cx="12.2" cy="14.8" r="5" fill="#fff"/><circle cx="12.2" cy="14.8" r="2.3" fill="#dde1e6"/><path d="M12.2 13.3 V16.3 M10.7 14.8 H13.7" stroke="#fff" stroke-width="0.9"/></svg>
    <div class="t" style="left:179px;top:269.5px;font-size:12px;color:#333">1262</div>
    <div class="t" style="left:258px;top:268.5px;font-size:12px;color:#333">泰力灰色</div>
    <div class="t" style="left:419px;top:268.5px;font-size:12px;color:#333">十孔</div>
    <div class="t" style="left:494px;top:268.5px;font-size:12px;color:#333">个</div>
    <div class="t" style="left:580.5px;width:87.5px;text-align:right;top:268.5px;font-size:12px;color:#ff5a1a">0</div>
    <div class="t" style="left:680.5px;width:227.5px;text-align:right;top:268.5px;font-size:12px;color:#ff5a1a">0</div>
    <div class="a" style="left:1.5px;top:321.0px;width:48.5px;height:1px;background:#e3e5e8"></div>
    <div class="a" style="left:51.0px;top:321.0px;width:39.0px;height:1px;background:#e3e5e8"></div>
    <div class="a" style="left:91.0px;top:321.0px;width:74.0px;height:1px;background:#e3e5e8"></div>
    <div class="a" style="left:166.0px;top:321.0px;width:79.0px;height:1px;background:#e3e5e8"></div>
    <div class="a" style="left:246.0px;top:321.0px;width:159.0px;height:1px;background:#e3e5e8"></div>
    <div class="a" style="left:406.0px;top:321.0px;width:74.0px;height:1px;background:#e3e5e8"></div>
    <div class="a" style="left:481.0px;top:321.0px;width:99.0px;height:1px;background:#e3e5e8"></div>
    <div class="a" style="left:581.0px;top:321.0px;width:99.0px;height:1px;background:#e3e5e8"></div>
    <div class="a" style="left:681.0px;top:321.0px;width:239.5px;height:1px;background:#e3e5e8"></div>
    <div class="t" style="left:1px;width:49.5px;text-align:center;top:301.5px;font-size:12px;color:#333">38</div>
    <div class="cb" style="left:64px;top:297.80px"></div>
    <svg class="a" style="left:116.5px;top:292.50px" width="24" height="24" viewBox="0 0 24 24"><rect width="24" height="24" fill="#dde1e6"/><path d="M9 6.2 V14" stroke="#fff" stroke-width="3.2" stroke-linecap="round"/><path d="M14.8 6.2 L11.5 11" stroke="#fff" stroke-width="3" stroke-linecap="round"/><circle cx="12.2" cy="14.8" r="5" fill="#fff"/><circle cx="12.2" cy="14.8" r="2.3" fill="#dde1e6"/><path d="M12.2 13.3 V16.3 M10.7 14.8 H13.7" stroke="#fff" stroke-width="0.9"/></svg>
    <div class="t" style="left:179px;top:301.5px;font-size:12px;color:#333">1263</div>
    <div class="t" style="left:258px;top:300.5px;font-size:12px;color:#333">泰力灰色</div>
    <div class="t" style="left:419px;top:300.5px;font-size:12px;color:#333">四开单</div>
    <div class="t" style="left:494px;top:300.5px;font-size:12px;color:#333">个</div>
    <div class="t" style="left:580.5px;width:87.5px;text-align:right;top:300.5px;font-size:12px;color:#ff5a1a">0</div>
    <div class="t" style="left:680.5px;width:227.5px;text-align:right;top:300.5px;font-size:12px;color:#ff5a1a">0</div>
    <div class="a" style="left:1.5px;top:353.0px;width:48.5px;height:1px;background:#e3e5e8"></div>
    <div class="a" style="left:51.0px;top:353.0px;width:39.0px;height:1px;background:#e3e5e8"></div>
    <div class="a" style="left:91.0px;top:353.0px;width:74.0px;height:1px;background:#e3e5e8"></div>
    <div class="a" style="left:166.0px;top:353.0px;width:79.0px;height:1px;background:#e3e5e8"></div>
    <div class="a" style="left:246.0px;top:353.0px;width:159.0px;height:1px;background:#e3e5e8"></div>
    <div class="a" style="left:406.0px;top:353.0px;width:74.0px;height:1px;background:#e3e5e8"></div>
    <div class="a" style="left:481.0px;top:353.0px;width:99.0px;height:1px;background:#e3e5e8"></div>
    <div class="a" style="left:581.0px;top:353.0px;width:99.0px;height:1px;background:#e3e5e8"></div>
    <div class="a" style="left:681.0px;top:353.0px;width:239.5px;height:1px;background:#e3e5e8"></div>
    <div class="t" style="left:1px;width:49.5px;text-align:center;top:333.5px;font-size:12px;color:#333">39</div>
    <div class="cb" style="left:64px;top:329.80px"></div>
    <svg class="a" style="left:116.5px;top:324.50px" width="24" height="24" viewBox="0 0 24 24"><rect width="24" height="24" fill="#dde1e6"/><path d="M9 6.2 V14" stroke="#fff" stroke-width="3.2" stroke-linecap="round"/><path d="M14.8 6.2 L11.5 11" stroke="#fff" stroke-width="3" stroke-linecap="round"/><circle cx="12.2" cy="14.8" r="5" fill="#fff"/><circle cx="12.2" cy="14.8" r="2.3" fill="#dde1e6"/><path d="M12.2 13.3 V16.3 M10.7 14.8 H13.7" stroke="#fff" stroke-width="0.9"/></svg>
    <div class="t" style="left:179px;top:333.5px;font-size:12px;color:#333">1264</div>
    <div class="t" style="left:258px;top:332.5px;font-size:12px;color:#333">泰力灰色</div>
    <div class="t" style="left:419px;top:332.5px;font-size:12px;color:#333">四开双</div>
    <div class="t" style="left:494px;top:332.5px;font-size:12px;color:#333">个</div>
    <div class="t" style="left:580.5px;width:87.5px;text-align:right;top:332.5px;font-size:12px;color:#ff5a1a">0</div>
    <div class="t" style="left:680.5px;width:227.5px;text-align:right;top:332.5px;font-size:12px;color:#ff5a1a">0</div>
    <div class="a" style="left:1.5px;top:385.0px;width:48.5px;height:1px;background:#e3e5e8"></div>
    <div class="a" style="left:51.0px;top:385.0px;width:39.0px;height:1px;background:#e3e5e8"></div>
    <div class="a" style="left:91.0px;top:385.0px;width:74.0px;height:1px;background:#e3e5e8"></div>
    <div class="a" style="left:166.0px;top:385.0px;width:79.0px;height:1px;background:#e3e5e8"></div>
    <div class="a" style="left:246.0px;top:385.0px;width:159.0px;height:1px;background:#e3e5e8"></div>
    <div class="a" style="left:406.0px;top:385.0px;width:74.0px;height:1px;background:#e3e5e8"></div>
    <div class="a" style="left:481.0px;top:385.0px;width:99.0px;height:1px;background:#e3e5e8"></div>
    <div class="a" style="left:581.0px;top:385.0px;width:99.0px;height:1px;background:#e3e5e8"></div>
    <div class="a" style="left:681.0px;top:385.0px;width:239.5px;height:1px;background:#e3e5e8"></div>
    <div class="t" style="left:1px;width:49.5px;text-align:center;top:365.5px;font-size:12px;color:#333">40</div>
    <div class="cb" style="left:64px;top:361.80px"></div>
    <svg class="a" style="left:116.5px;top:356.50px" width="24" height="24" viewBox="0 0 24 24"><rect width="24" height="24" fill="#dde1e6"/><path d="M9 6.2 V14" stroke="#fff" stroke-width="3.2" stroke-linecap="round"/><path d="M14.8 6.2 L11.5 11" stroke="#fff" stroke-width="3" stroke-linecap="round"/><circle cx="12.2" cy="14.8" r="5" fill="#fff"/><circle cx="12.2" cy="14.8" r="2.3" fill="#dde1e6"/><path d="M12.2 13.3 V16.3 M10.7 14.8 H13.7" stroke="#fff" stroke-width="0.9"/></svg>
    <div class="t" style="left:179px;top:365.5px;font-size:12px;color:#333">1265</div>
    <div class="t" style="left:258px;top:364.5px;font-size:12px;color:#333">泰力灰色</div>
    <div class="t" style="left:419px;top:364.5px;font-size:12px;color:#333">网</div>
    <div class="t" style="left:494px;top:364.5px;font-size:12px;color:#333">个</div>
    <div class="t" style="left:580.5px;width:87.5px;text-align:right;top:364.5px;font-size:12px;color:#ff5a1a">0</div>
    <div class="t" style="left:680.5px;width:227.5px;text-align:right;top:364.5px;font-size:12px;color:#ff5a1a">0</div>
    <div class="a" style="left:1px;top:74px;width:920px;height:32px;background:#e8e9eb"></div>
    <div class="a" style="left:50.0px;top:74px;width:1px;height:32px;background:#c9cbce"></div>
    <div class="a" style="left:90.0px;top:74px;width:1px;height:32px;background:#c9cbce"></div>
    <div class="a" style="left:165.0px;top:74px;width:1px;height:32px;background:#c9cbce"></div>
    <div class="a" style="left:245.0px;top:74px;width:1px;height:32px;background:#c9cbce"></div>
    <div class="a" style="left:405.0px;top:74px;width:1px;height:32px;background:#c9cbce"></div>
    <div class="a" style="left:480.0px;top:74px;width:1px;height:32px;background:#c9cbce"></div>
    <div class="a" style="left:580.0px;top:74px;width:1px;height:32px;background:#c9cbce"></div>
    <div class="a" style="left:680.0px;top:74px;width:1px;height:32px;background:#c9cbce"></div>
    <svg class="a" style="left:18.5px;top:84px" width="14" height="14" viewBox="0 0 14 14"><path d="M13.20 7.00 Q10.63 9.09 10.10 12.37 Q7.00 11.19 3.90 12.37 Q3.37 9.09 0.80 7.00 Q3.37 4.91 3.90 1.63 Q7.00 2.81 10.10 1.63 Q10.63 4.91 13.20 7.00Z" fill="none" stroke="#555" stroke-width="1.1" stroke-linejoin="round"/><circle cx="7" cy="7" r="2.1" fill="none" stroke="#555" stroke-width="1.1"/></svg>
    <div class="cb" style="left:64px;top:83.5px;border-color:#b5b5b5"></div>
    <div class="t" style="left:90.5px;width:75px;text-align:center;top:85px;font-size:12px;font-weight:bold;color:#333">商品图片</div>
    <svg class="a" style="left:177.8px;top:86px" width="9" height="13" viewBox="0 0 9 13"><path d="M0.5 5 L4.5 0.5 L8.5 5Z" fill="#b8b8b8"/><path d="M0.5 8 L4.5 12.5 L8.5 8Z" fill="#b8b8b8"/></svg>
    <div class="t" style="left:192.5px;top:85px;font-size:12px;font-weight:bold;color:#333">商品...</div>
    <svg class="a" style="left:257.8px;top:86px" width="9" height="13" viewBox="0 0 9 13"><path d="M0.5 5 L4.5 0.5 L8.5 5Z" fill="#ff7a33"/><path d="M0.5 8 L4.5 12.5 L8.5 8Z" fill="#b8b8b8"/></svg>
    <div class="t" style="left:272.5px;top:85px;font-size:12px;font-weight:bold;color:#333">商品名称</div>
    <svg class="a" style="left:418px;top:86px" width="9" height="13" viewBox="0 0 9 13"><path d="M0.5 5 L4.5 0.5 L8.5 5Z" fill="#b8b8b8"/><path d="M0.5 8 L4.5 12.5 L8.5 8Z" fill="#b8b8b8"/></svg>
    <div class="t" style="left:432px;top:85px;font-size:12px;font-weight:bold;color:#333">规格...</div>
    <svg class="a" style="left:493.3px;top:86px" width="9" height="13" viewBox="0 0 9 13"><path d="M0.5 5 L4.5 0.5 L8.5 5Z" fill="#b8b8b8"/><path d="M0.5 8 L4.5 12.5 L8.5 8Z" fill="#b8b8b8"/></svg>
    <div class="t" style="left:507.5px;top:85px;font-size:12px;font-weight:bold;color:#333">主计量</div>
    <div class="t" style="left:580.5px;width:87.5px;text-align:right;top:85px;font-size:12px;font-weight:bold;color:#333">可用量</div>
    <div class="t" style="left:680.5px;width:229px;text-align:right;top:85px;font-size:12px;font-weight:bold;color:#333">现存量</div>
    <div class="a" style="left:913.5px;top:291px;width:8px;height:55px;border-radius:4px;background:rgba(0,0,0,0.32)"></div>

  </div></div>

</div>

<div class="a" style="left:1206px;top:610px;width:160px;height:26px;background:#fff;border:1px solid #b9d3f0;border-right:none;border-bottom:none;border-radius:3px 0 0 0"></div>
<svg class="a" style="left:1186px;top:604px" width="36" height="32" viewBox="0 0 36 32"><g transform="rotate(-14 18 17)"><rect x="4" y="4" width="27" height="27" rx="5" fill="#f0571d"/><path d="M25 10.5 Q18 8 12 10.5 Q8 12.5 11 15.5 Q14 17.5 20 17.5 Q24 18.5 21 21 Q16 23.5 9 21.5" fill="none" stroke="#fff" stroke-width="3.6" stroke-linecap="round"/></g></svg>
<div class="t" style="left:1225px;top:614.5px;font-size:16px;font-weight:bold;color:#0a6ed6">中</div>
<svg class="a" style="left:1251px;top:617px" width="14" height="13" viewBox="0 0 14 13"><circle cx="3.2" cy="3.5" r="1.7" fill="none" stroke="#0a6ed6" stroke-width="1.4"/><path d="M10 4.5 Q12.5 4.5 11.5 8 Q10.8 10 9 11" fill="none" stroke="#0a6ed6" stroke-width="2" stroke-linecap="round"/><circle cx="10.3" cy="5.2" r="1.5" fill="#0a6ed6"/></svg>
<svg class="a" style="left:1274px;top:614px" width="13" height="20" viewBox="0 0 13 20"><rect x="3.5" y="0.5" width="6" height="11" rx="3" fill="#0a6ed6"/><path d="M1 8 Q1 14 6.5 14 Q12 14 12 8" fill="none" stroke="#0a6ed6" stroke-width="1.6"/><path d="M6.5 14 V17.5 M3.5 18 H9.5" stroke="#0a6ed6" stroke-width="1.6"/></svg>
<svg class="a" style="left:1297px;top:616px" width="16" height="13" viewBox="0 0 16 13"><rect x="0.8" y="0.8" width="14.4" height="11.4" rx="1.5" fill="none" stroke="#0a6ed6" stroke-width="1.6"/><g fill="#0a6ed6"><rect x="3" y="3" width="2" height="1.6"/><rect x="6" y="3" width="2" height="1.6"/><rect x="9" y="3" width="2" height="1.6"/><rect x="12" y="3" width="1.5" height="1.6"/><rect x="3" y="5.7" width="2" height="1.6"/><rect x="6" y="5.7" width="2" height="1.6"/><rect x="9" y="5.7" width="2" height="1.6"/><rect x="12" y="5.7" width="1.5" height="1.6"/><rect x="4" y="8.4" width="8" height="1.6"/></g></svg>
<svg class="a" style="left:1321px;top:615px" width="17" height="15" viewBox="0 0 17 15"><path d="M5 0.5 L1 2.5 L0.5 7 L3.5 7.5 V14.5 H13.5 V7.5 L16.5 7 L16 2.5 L12 0.5 Q8.5 3 5 0.5Z" fill="#0a6ed6"/></svg>
<svg class="a" style="left:1347px;top:616.5px" width="14" height="14" viewBox="0 0 14 14"><g fill="#0a6ed6"><rect x="0" y="0" width="6" height="6" rx="1.5"/><rect x="8" y="0" width="6" height="6" rx="3" fill="none" stroke="#0a6ed6" stroke-width="1.5"/><rect x="0" y="8" width="6" height="6" rx="1.5"/><rect x="8" y="8" width="6" height="6" rx="1.5"/></g></svg>
</body></html>
